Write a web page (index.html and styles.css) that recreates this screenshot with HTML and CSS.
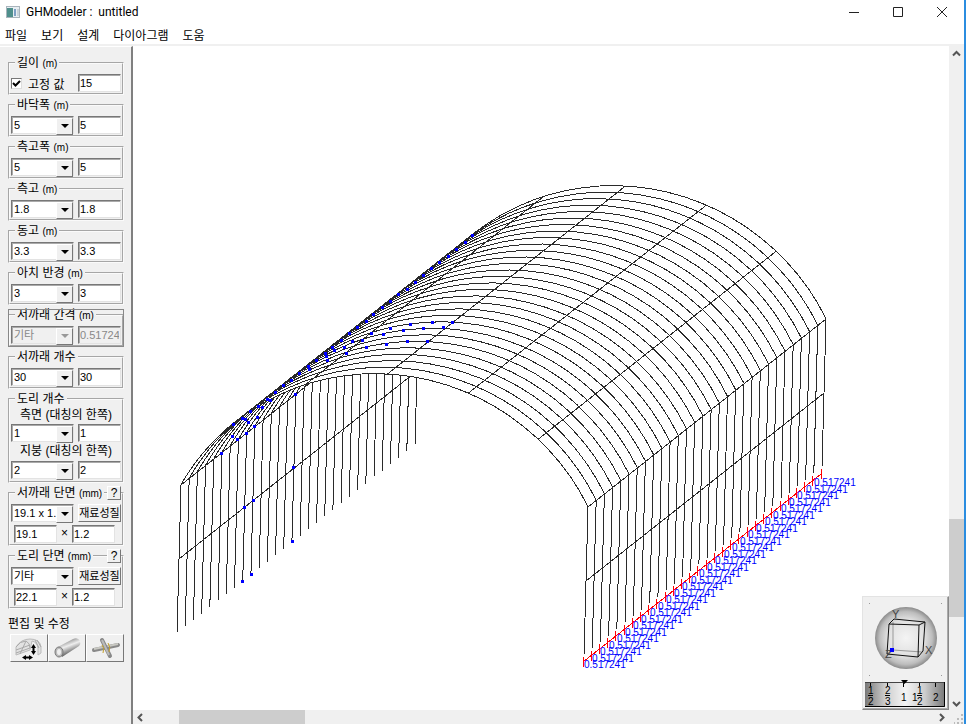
FILE: index.html
```html
<!DOCTYPE html>
<html lang="ko">
<head>
    <meta charset="UTF-8">
    <meta name="viewport" content="width=device-width, initial-scale=1.0">
    <title>GHModeler : untitled</title>
    <link rel="stylesheet" href="styles.css">
</head>
<body>
    <header class="titlebar">
        <svg class="app-icon" width="14" height="12" viewBox="0 0 14 12">
            <rect x="0.5" y="0.5" width="13" height="11" fill="#e8eef2" stroke="#a9b4bc"/>
            <rect x="1" y="2" width="6" height="9" fill="#4f8f8c"/>
            <rect x="8" y="3" width="2" height="7" fill="#7d9fc4"/>
            <rect x="11" y="3" width="2" height="7" fill="#c9d3da"/>
        </svg>
        <h1>GHModeler :&nbsp; untitled</h1>
        <div class="window-buttons">
            <button aria-label="최소화"><svg width="12" height="12" viewBox="0 0 12 12"><path d="M1 6.5H11"/></svg></button>
            <button aria-label="최대화"><svg width="12" height="12" viewBox="0 0 12 12"><path d="M1.5 1.5H10.5V10.5H1.5Z"/></svg></button>
            <button aria-label="닫기"><svg width="12" height="12" viewBox="0 0 12 12"><path d="M1 1L11 11M11 1L1 11"/></svg></button>
        </div>
    </header>

    <nav class="menubar">
        <button>파일</button>
        <button>보기</button>
        <button>설계</button>
        <button>다이아그램</button>
        <button>도움</button>
    </nav>

    <div class="workspace">
        <aside class="sidebar">
            <fieldset>
                <legend>길이 <small>(m)</small></legend>
                <div class="row">
                    <label class="check"><input type="checkbox" checked> 고정 값</label>
                    <input type="text" aria-label="길이" value="15">
                </div>
            </fieldset>
            <fieldset>
                <legend>바닥폭 <small>(m)</small></legend>
                <div class="row">
                    <span class="combo"><select aria-label="바닥폭 선택"><option>5</option></select></span>
                    <input type="text" aria-label="바닥폭" value="5">
                </div>
            </fieldset>
            <fieldset>
                <legend>측고폭 <small>(m)</small></legend>
                <div class="row">
                    <span class="combo"><select aria-label="측고폭 선택"><option>5</option></select></span>
                    <input type="text" aria-label="측고폭" value="5">
                </div>
            </fieldset>
            <fieldset>
                <legend>측고 <small>(m)</small></legend>
                <div class="row">
                    <span class="combo"><select aria-label="측고 선택"><option>1.8</option></select></span>
                    <input type="text" aria-label="측고" value="1.8">
                </div>
            </fieldset>
            <fieldset>
                <legend>동고 <small>(m)</small></legend>
                <div class="row">
                    <span class="combo"><select aria-label="동고 선택"><option>3.3</option></select></span>
                    <input type="text" aria-label="동고" value="3.3">
                </div>
            </fieldset>
            <fieldset>
                <legend>아치 반경 <small>(m)</small></legend>
                <div class="row">
                    <span class="combo"><select aria-label="아치 반경 선택"><option>3</option></select></span>
                    <input type="text" aria-label="아치 반경" value="3">
                </div>
            </fieldset>
            <fieldset class="locked" disabled>
                <legend>서까래 간격 <small>(m)</small></legend>
                <div class="row">
                    <span class="combo"><select aria-label="서까래 간격 선택"><option>기타</option></select></span>
                    <input type="text" aria-label="서까래 간격" value="0.51724">
                </div>
            </fieldset>
            <fieldset>
                <legend>서까래 개수</legend>
                <div class="row">
                    <span class="combo"><select aria-label="서까래 개수 선택"><option>30</option></select></span>
                    <input type="text" aria-label="서까래 개수" value="30">
                </div>
            </fieldset>
            <fieldset class="purlins">
                <legend>도리 개수</legend>
                <label for="sidePurlins">측면 (대칭의 한쪽)</label>
                <div class="row">
                    <span class="combo"><select aria-label="측면 선택"><option>1</option></select></span>
                    <input type="text" id="sidePurlins" value="1">
                </div>
                <label for="roofPurlins">지붕 (대칭의 한쪽)</label>
                <div class="row">
                    <span class="combo"><select aria-label="지붕 선택"><option>2</option></select></span>
                    <input type="text" id="roofPurlins" value="2">
                </div>
            </fieldset>
            <fieldset class="section">
                <legend>서까래 단면 <small>(mm)</small></legend>
                <button class="help">?</button>
                <div class="row">
                    <span class="combo"><select aria-label="서까래 단면"><option>19.1 x 1.2</option></select></span>
                    <button class="material">재료성질</button>
                </div>
                <div class="row size">
                    <input type="text" aria-label="서까래 지름" value="19.1">
                    <span>×</span>
                    <input type="text" aria-label="서까래 두께" value="1.2">
                </div>
            </fieldset>
            <fieldset class="section">
                <legend>도리 단면 <small>(mm)</small></legend>
                <button class="help">?</button>
                <div class="row">
                    <span class="combo"><select aria-label="도리 단면"><option>기타</option></select></span>
                    <button class="material">재료성질</button>
                </div>
                <div class="row size">
                    <input type="text" aria-label="도리 지름" value="22.1">
                    <span>×</span>
                    <input type="text" aria-label="도리 두께" value="1.2">
                </div>
            </fieldset>

            <h2>편집 및 수정</h2>
            <div class="tools">
                <button aria-label="구조 편집">
                    <svg width="32" height="24" viewBox="0 0 32 24">
                        <path d="M3 19V11Q8 3 17 3Q27 3 28 11V17L25 19V12Q24 6 19 5L17 14L3 19Z" fill="#e2e2e2" stroke="#bbb"/>
                        <path d="M3 11Q7 5 13 5Q17 7 17 12M3 14L17 9M3 17L17 12M7 18L13 5M22 4L26 12M24 4L28 11" fill="none" stroke="#aaa"/>
                        <path d="M20.500 11V17M12 21.500H17" stroke="#000" stroke-width="2"/>
                        <path d="M20.500 8L23 12H18ZM20.500 19L23 15H18ZM9 21.500L13 19V24ZM20 21.500L16 19V24Z"/>
                    </svg>
                </button>
                <button aria-label="파이프">
                    <svg width="32" height="24" viewBox="0 0 32 24">
                        <defs>
                            <linearGradient id="pipe" x1="0.3" y1="0.2" x2="0.6" y2="0.8">
                                <stop offset="0" stop-color="#999"/>
                                <stop offset="0.4" stop-color="#eee"/>
                                <stop offset="1" stop-color="#666"/>
                            </linearGradient>
                        </defs>
                        <path d="M5 12L22 3Q27 1 29 5Q30 8 28 10L11 21Z" fill="url(#pipe)"/>
                        <ellipse cx="8" cy="16" rx="4" ry="5" fill="#bbb" stroke="#777"/>
                        <ellipse cx="8" cy="16" rx="2" ry="3" fill="#eee"/>
                    </svg>
                </button>
                <button aria-label="접합">
                    <svg width="32" height="24" viewBox="0 0 32 24">
                        <path d="M5 14L29 9" stroke="#888" stroke-width="4" stroke-linecap="round"/>
                        <path d="M5 13L29 8" stroke="#c8c8c2" stroke-width="2"/>
                        <path d="M13 4L21 20" stroke="#888" stroke-width="4" stroke-linecap="round"/>
                        <path d="M13 4L20 19" stroke="#bbb" stroke-width="2"/>
                        <path d="M13 9Q16 12 14 17M19 7Q22 11 20 16" fill="none" stroke="#c5a02c"/>
                    </svg>
                </button>
            </div>
        </aside>

        <main class="viewport">
            <svg class="model" id="model"></svg>
            <section class="navigator" aria-label="시점">
                <svg class="trackball" width="84" height="82" viewBox="0 0 84 82">
                    <defs>
                        <radialGradient id="ball">
                            <stop offset="0" stop-color="#f4f4f4"/>
                            <stop offset="0.6" stop-color="#e0e0e0"/>
                            <stop offset="0.85" stop-color="#bdbdbd"/>
                            <stop offset="1" stop-color="#8c8c8c"/>
                        </radialGradient>
                    </defs>
                    <circle cx="42" cy="40" r="31" fill="url(#ball)"/>
                    <path d="M29 24V52L58 54M23 58L29 52" stroke="#999" fill="none"/>
                    <path d="M25 26L55 27L54 59L23 56ZM25 26L30 21L61 24L59 53L54 59M55 27L61 24" fill="none" stroke="#111"/>
                    <text x="28" y="20">Y</text>
                    <text x="61" y="56">X</text>
                    <text x="21" y="60">Z</text>
                    <rect x="26" y="50" width="4" height="4" fill="#00f"/>
                    <path d="M5.500 5V6M77.500 5V6M5.500 77V78M77.500 77V78" stroke="#999"/>
                </svg>
                <svg class="zoom-dial" width="80" height="29" viewBox="0 0 80 29">
                    <defs>
                        <linearGradient id="dial">
                            <stop offset="0" stop-color="#777"/>
                            <stop offset="0.25" stop-color="#ccc"/>
                            <stop offset="0.5" stop-color="#f4f4f4"/>
                            <stop offset="0.75" stop-color="#ccc"/>
                            <stop offset="1" stop-color="#777"/>
                        </linearGradient>
                    </defs>
                    <rect x="0" y="2" width="80" height="25" fill="url(#dial)"/>
                    <path d="M0 26.500H79.500V2" fill="none" stroke="#000"/>
                    <path d="M0 2.500H79" stroke="#444"/>
                    <path d="M36 0H43L39.500 4Z"/>
                    <path d="M5.500 3V6M22.500 3V6M38.500 3V7M54.500 3V6M70.500 3V7M3 15.500H8M20 15.500H25M52 15.500H57" stroke="#000"/>
                    <text x="3" y="14">1</text><text x="3" y="25">2</text>
                    <text x="20" y="14">2</text><text x="20" y="25">3</text>
                    <text x="36" y="21">1</text>
                    <text x="47" y="21">1</text><text x="52" y="14">1</text><text x="52" y="25">2</text>
                    <text x="68" y="21">2</text>
                </svg>
            </section>
        </main>

        <div class="scroll vertical">
            <button aria-label="위로"><svg width="9" height="9" viewBox="0 0 9 9"><path d="M1 6.500L4.500 3L8 6.500"/></svg></button>
            <div class="track"><div class="thumb"></div></div>
            <button aria-label="아래로"><svg width="9" height="9" viewBox="0 0 9 9"><path d="M1 3L4.500 6.500L8 3"/></svg></button>
        </div>
        <div class="scroll horizontal">
            <button aria-label="왼쪽으로"><svg width="9" height="9" viewBox="0 0 9 9"><path d="M6 1L2.500 4.500L6 8"/></svg></button>
            <div class="track"><div class="thumb"></div></div>
            <button aria-label="오른쪽으로"><svg width="9" height="9" viewBox="0 0 9 9"><path d="M3 1L6.500 4.500L3 8"/></svg></button>
        </div>
        <div class="grip">
            <svg width="10" height="10" viewBox="0 0 10 10"><path d="M7 0H9V2H7ZM7 4H9V6H7ZM7 8H9V10H7ZM3 4H5V6H3ZM3 8H5V10H3ZM0 8H1V10H0Z" fill="#bbb"/></svg>
        </div>
    </div>

    <script src="model.js"></script>
</body>
</html>
```

FILE: styles.css
```css
* {
    box-sizing: border-box;
}
body {
    margin: 0;
    height: 100vh;
    display: flex;
    flex-direction: column;
    overflow: hidden;
    background: #fff;
    border-right: 2px solid #2b8de0;
    font-family: "Liberation Sans", "Noto Sans CJK KR", sans-serif;
    font-size: 12px;
    color: #000;
}
button, input, select {
    font: inherit;
    color: inherit;
    margin: 0;
    padding: 0;
    border-radius: 0;
}
.titlebar {
    display: flex;
    align-items: center;
    height: 24px;
    padding-left: 6px;
    flex: none;
}
.titlebar h1 {
    flex: 1;
    margin: 0 0 0 6px;
    font-family: Roboto, "Noto Sans CJK KR", sans-serif;
    font-size: 12px;
    font-weight: 400;
}
.window-buttons {
    display: flex;
}
.window-buttons button {
    display: flex;
    align-items: center;
    justify-content: center;
    width: 44px;
    height: 24px;
    border: none;
    background: none;
}
.window-buttons path {
    fill: none;
    stroke: #222;
}
.menubar {
    display: flex;
    gap: 14px;
    height: 22px;
    padding-left: 5px;
    border-bottom: 2px solid #f0f0f0;
    flex: none;
}
.menubar button {
    padding-top: 1px;
    border: none;
    background: none;
    font-family: "Noto Sans CJK KR", sans-serif;
    line-height: 20px;
}
.workspace {
    flex: 1;
    min-height: 0;
    display: grid;
    grid-template-columns: 133px minmax(0, 1fr) 15px;
    grid-template-rows: minmax(0, 1fr) 14px;
}

/* parameter panel */
.sidebar {
    grid-row: 1 / 3;
    padding: 10px 7px 0 8px;
    overflow: hidden;
    background: #f0f0f0;
    border-top: 1px solid #fff;
    border-right: 2px solid #808080;
}
fieldset {
    position: relative;
    width: 116px;
    min-width: 0;
    margin: 0 0 4px;
    padding: 5px 1px 1px;
    border: 2px groove #fafafa;
}
legend {
    height: 12px;
    margin-left: 4px;
    padding: 0 2px;
    line-height: 12px;
    white-space: nowrap;
}
legend small {
    font-size: 10px;
}
.row {
    display: flex;
    gap: 4px;
    height: 18px;
}
input[type="text"] {
    width: 43px;
    height: 18px;
    padding: 0 1px;
    background: #fff;
    border: 1px solid;
    border-color: #777 #e3e3e3 #e3e3e3 #777;
    box-shadow: inset 1px 1px 0 #aaa;
    font-size: 11px;
    outline: none;
}
.combo {
    position: relative;
    width: 63px;
    height: 18px;
}
.combo select {
    width: 100%;
    height: 18px;
    padding: 0 14px 0 2px;
    appearance: none;
    background: #fff;
    border: 1px solid;
    border-color: #777 #e3e3e3 #e3e3e3 #777;
    box-shadow: inset 1px 1px 0 #aaa;
    font-size: 11px;
    outline: none;
}
.combo::before {
    content: "";
    position: absolute;
    top: 2px;
    right: 1px;
    width: 15px;
    height: 15px;
    background: #f0f0f0;
    border: 1px solid;
    border-color: #fff #777 #777 #fff;
    pointer-events: none;
}
.combo::after {
    content: "";
    position: absolute;
    top: 8px;
    right: 5px;
    border: 4px solid transparent;
    border-top-color: #000;
    border-bottom: none;
    pointer-events: none;
}
.check {
    display: flex;
    align-items: center;
    gap: 6px;
    width: 63px;
    white-space: nowrap;
}
.check input {
    appearance: none;
    width: 11px;
    height: 11px;
    background: #fff;
    border: 1px solid;
    border-color: #777 #ddd #ddd #777;
}
.check input:checked {
    background: #fff url("data:image/svg+xml,%3Csvg xmlns='http://www.w3.org/2000/svg' viewBox='0 0 9 9'%3E%3Cpath d='M1 4L3.500 6.500L8 2' fill='none' stroke='%23000' stroke-width='2'/%3E%3C/svg%3E") center / 9px 9px;
}
.locked {
    outline: 1px solid #888;
    outline-offset: -1px;
}
.locked input[type="text"],
.locked select {
    color: #888;
    background: #f0f0f0;
    opacity: 1;
}
.locked .combo::after {
    border-top-color: #999;
}
.purlins {
    padding-top: 3px;
    padding-bottom: 2px;
}
.purlins label {
    display: block;
    height: 16px;
    margin-left: 9px;
    line-height: 15px;
    white-space: nowrap;
}
.purlins .row + label {
    height: 19px;
    line-height: 19px;
}
.section .row + .row {
    margin-top: 3px;
}
.help {
    position: absolute;
    top: -13px;
    right: 1px;
    width: 14px;
    height: 14px;
    line-height: 12px;
}
.help, .material, .tools button {
    background: #f0f0f0;
    border: 1px solid;
    border-color: #fff #777 #777 #fff;
}
.material {
    width: 43px;
    height: 18px;
    font-size: 11px;
    line-height: 14px;
    white-space: nowrap;
}
.section .size {
    gap: 0;
    margin-left: 3px;
}
.size span {
    width: 15px;
    line-height: 16px;
    text-align: center;
}
.sidebar h2 {
    margin: 8px 0 3px;
    font-size: 12px;
    font-weight: 400;
    line-height: 14px;
}
.tools {
    display: flex;
    margin-left: 2px;
}
.tools button {
    display: flex;
    align-items: center;
    justify-content: center;
    width: 38px;
    height: 28px;
}

/* model view */
.viewport {
    position: relative;
    overflow: hidden;
    background: #fff;
}
.model {
    display: block;
    width: 100%;
    height: 100%;
}
.line {
    fill: none;
    stroke: #2a2a2a;
    shape-rendering: crispEdges;
}
.cover {
    fill: #fff;
}
.node {
    fill: #00f;
}
.dimension {
    fill: none;
    stroke: #f00;
    shape-rendering: crispEdges;
}
.measure {
    fill: #00f;
    font-size: 10px;
}
.navigator {
    position: absolute;
    right: 0;
    bottom: 0;
    width: 87px;
    height: 114px;
    padding: 1px;
    background: #f0f0f0;
    border: 1px solid;
    border-color: #e3e3e3 #888 #888 #e3e3e3;
    box-shadow: inset -1px -1px 0 #aaa;
}
.navigator svg {
    display: block;
}
.trackball text {
    font-size: 11px;
    fill: #444;
}
.zoom-dial {
    margin-left: 1px;
}
.zoom-dial text {
    font-size: 10px;
}

/* scroll bars */
.scroll {
    display: flex;
    background: #f0f0f0;
}
.scroll button {
    display: flex;
    align-items: center;
    justify-content: center;
    width: 15px;
    height: 14px;
    border: none;
    background: none;
    flex: none;
}
.scroll path {
    fill: none;
    stroke: #555;
    stroke-width: 2;
}
.track {
    display: flex;
    flex: 1;
}
.thumb {
    background: #cdcdcd;
}
.vertical {
    flex-direction: column;
}
.vertical .track {
    flex-direction: column;
    justify-content: flex-end;
    padding-bottom: 79px;
}
.vertical .thumb {
    height: 98px;
}
.horizontal .track {
    padding-left: 31px;
}
.horizontal .thumb {
    width: 126px;
}
.grip {
    display: flex;
    align-items: flex-end;
    justify-content: flex-end;
    background: #f0f0f0;
}
```

FILE: model.js
```js
const svg = document.getElementById('model');
const FRAMES = 30;
const DEPTH = [238, -188];      // front frame to back frame on screen
const WALL = [-4, 148];         // eaves down to the ground
const LEFT = [48, 439];         // eaves of the front frame
const RIGHT = [455, 461];
const RADIUS = 2.833;
const HALF = 61.9;              // half of the arch angle, degrees
const EDGE = -40.6;             // where the roof turns away from the viewer

function add(name, cls, attrs) {
    const el = document.createElementNS('http://www.w3.org/2000/svg', name);
    el.setAttribute('class', cls);
    for (const key in attrs) {
        el.setAttribute(key, attrs[key]);
    }
    svg.appendChild(el);
    return el;
}

function shift(p, k) {
    const t = k / (FRAMES - 1);
    return [p[0] + DEPTH[0] * t, p[1] + DEPTH[1] * t];
}

function down(p, t) {
    return [p[0] + WALL[0] * t, p[1] + WALL[1] * t];
}

function path(points, cls = 'line') {
    add('path', cls, { d: 'M' + points.map(p => p[0].toFixed(1) + ' ' + p[1].toFixed(1)).join('L') });
}

function archPoint(deg) {
    const a = deg * Math.PI / 180;
    const u = RADIUS * Math.sin(a);
    const h = RADIUS * Math.cos(a) - 1.333;
    return [251.5 + 81.4 * u + 2 * h, 449.5 + 4.4 * u - 81 * h];
}

function arch(from, to, k) {
    const points = [];
    for (let i = 0; i <= 24; i++) {
        points.push(shift(archPoint(from + (to - from) * i / 24), k));
    }
    return points;
}

function along(p) {
    path([p, shift(p, FRAMES - 1)]);
}

// far wall and the inside of the roof
for (let k = 0; k < FRAMES; k++) {
    path([shift(LEFT, k), shift(down(LEFT, 1), k)]);
    path(arch(-HALF, EDGE, k));
}
along(LEFT);
along(down(LEFT, 0.5));

// outside of the roof hides what is behind it
path(arch(EDGE, HALF, 0).concat(arch(EDGE, HALF, FRAMES - 1).reverse()), 'cover');
for (let k = 0; k < FRAMES; k++) {
    path(arch(EDGE, HALF, k));
    path([shift(RIGHT, k), shift(down(RIGHT, 1), k)]);
}
for (const n of [-2, -1, 0, 1, 2]) {
    along(archPoint(HALF * n / 3));
}
along(RIGHT);
along(down(RIGHT, 0.5));

// spacing dimension along the ground
const base = [450, 616];
path([base, shift(base, FRAMES - 1)], 'dimension');
for (let k = 0; k < FRAMES; k++) {
    const p = shift(base, k);
    path([[p[0], p[1] - 5], [p[0], p[1] + 5]], 'dimension');
    if (k < FRAMES - 1) {
        add('text', 'measure', { x: Math.round(p[0] + 1), y: Math.round(p[1] + 6) }).textContent = '0.517241';
    }
}

const nodes = [
    [109, 535], [118, 528], [159, 495], [111, 461], [120, 454], [160, 421],
    [88, 407], [104, 393], [113, 387], [121, 380], [162, 348], [99, 390],
    [100, 378], [109, 372], [112, 373], [115, 376], [124, 371], [117, 365],
    [125, 360], [129, 361], [134, 353], [137, 354], [142, 346], [150, 339],
    [158, 334], [166, 327], [175, 320], [176, 323], [183, 314], [194, 314],
    [192, 307], [193, 310], [213, 307], [201, 304], [199, 301], [211, 301],
    [233, 301], [253, 298], [274, 295], [294, 295], [219, 295], [229, 294],
    [250, 288], [270, 284], [290, 282], [310, 281], [319, 276], [299, 276],
    [277, 278], [257, 282], [238, 287], [208, 294], [216, 287], [224, 281],
    [233, 275], [240, 268], [249, 261], [257, 255], [265, 248], [274, 243],
    [282, 236], [290, 229], [298, 222], [306, 216], [315, 210], [323, 203],
    [332, 196], [339, 189]
];
for (const [x, y] of nodes) {
    add('rect', 'node', { x: x - 1, y: y - 1, width: 3, height: 3 });
}
```
